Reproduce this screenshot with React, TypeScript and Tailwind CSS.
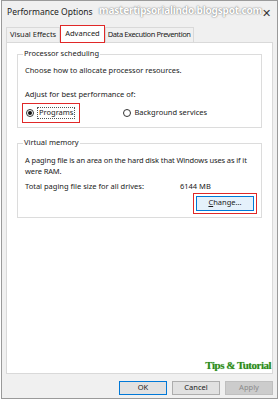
import React from "react";

const font = { fontFamily: '"Noto Sans", "Open Sans", sans-serif' };

export default function App() {
  return (
    <div className="w-[278px] h-[400px] bg-white overflow-hidden" style={font}>
      <div className="ml-[1px] w-[277px] h-[399px] border border-[#9a9a9a] bg-[#f0f0f0] flex flex-col relative text-[7.5px] text-[#1a1a1a] leading-none">
        {/* title bar */}
        <div className="h-[22px] flex items-center justify-between pl-[5px] pr-[6px] relative">
          <span className="text-[8.5px] text-[#222]">Performance Options</span>
          <span className="text-[11px] text-[#333] font-light">✕</span>
          <span
            className="absolute right-[15px] top-[4px] text-[10px] font-bold text-white tracking-[-0.2px]"
            style={{ textShadow: "0 0 1px #777, 0 0 2px #999" }}
          >
            mastertipsorialindo.blogspot.com
          </span>
        </div>

        {/* tabs */}
        <div className="px-[4px] pt-[4px] flex items-end h-[19px]">
          <div className="h-[15px] px-[3px] flex items-center border border-[#d9d9d9] border-b-0 bg-[#f0f0f0]">Visual Effects</div>
          <div className="h-[18px] px-[4px] flex items-center bg-white border-[1.5px] border-[#e02828] -mb-[1px] z-10">Advanced</div>
          <div className="h-[15px] px-[2px] flex items-center border border-[#d9d9d9] border-b-0 bg-[#f0f0f0] tracking-[-0.4px]">Data Execution Prevention</div>
        </div>

        {/* panel */}
        <div className="mx-[4px] h-[332px] bg-white border border-[#d9d9d9] px-[10px] pt-[11px] flex flex-col relative">
          {/* processor scheduling */}
          <div className="border border-[#dcdcdc] h-[74px] relative px-[7px] pt-[12px]">
            <span className="absolute -top-[5px] left-[5px] bg-white px-[1px]">Processor scheduling</span>
            <div>Choose how to allocate processor resources.</div>
            <div className="mt-[16px]">Adjust for best performance of:</div>
            <div className="mt-[8px] flex items-center">
              <div className="flex items-center gap-[3px] outline-[1.5px] outline-solid outline-[#e02828] outline-offset-[2px] pl-[1px] pr-[2px] py-[1px]">
                <span className="w-[8px] h-[8px] rounded-full border border-[#333] flex items-center justify-center">
                  <span className="w-[4px] h-[4px] rounded-full bg-[#111]" />
                </span>
                <span className="border border-dotted border-[#555] px-[1px] py-[1px]">Programs</span>
              </div>
              <div className="ml-[46px] flex items-center gap-[3px]">
                <span className="w-[8px] h-[8px] rounded-full border border-[#333]" />
                <span>Background services</span>
              </div>
            </div>
          </div>

          {/* virtual memory */}
          <div className="mt-[15px] border border-[#dcdcdc] h-[75px] relative pl-[7px] pr-[1px] pt-[11px]">
            <span className="absolute -top-[5px] left-[5px] bg-white px-[1px]">Virtual memory</span>
            <div className="leading-[11px] tracking-[-0.12px]">A paging file is an area on the hard disk that Windows uses as if it were RAM.</div>
            <div className="mt-[6px] flex">
              <span className="w-[155px]">Total paging file size for all drives:</span>
              <span>6144 MB</span>
            </div>
            <div className="mt-[5px] flex justify-end pr-[6px]">
              <div className="outline-[1.5px] outline-solid outline-[#e02828] outline-offset-[2px]">
                <div className="w-[58px] h-[15px] bg-[#e5f1fb] border border-[#0078d7] flex items-center justify-center">
                  <span><span className="underline">C</span>hange...</span>
                </div>
              </div>
            </div>
          </div>

          <span
            className="absolute right-[1px] bottom-[2px] text-[11px] font-bold text-[#2e8b18] tracking-[-0.5px]"
            style={{ fontFamily: '"Liberation Serif", serif', textShadow: "0 0 1px #9c9" }}
          >
            Tips &amp; Tutorial
          </span>
        </div>

        {/* buttons */}
        <div className="flex justify-end gap-[5px] pr-[4px] pt-[7px]">
          <div className="w-[48px] h-[14px] bg-[#e1e1e1] border border-[#0078d7] flex items-center justify-center">OK</div>
          <div className="w-[48px] h-[14px] bg-[#e1e1e1] border border-[#adadad] flex items-center justify-center">Cancel</div>
          <div className="w-[48px] h-[14px] bg-[#cccccc] border border-[#bfbfbf] flex items-center justify-center text-[#8a8a8a]">Apply</div>
        </div>
      </div>
    </div>
  );
}
